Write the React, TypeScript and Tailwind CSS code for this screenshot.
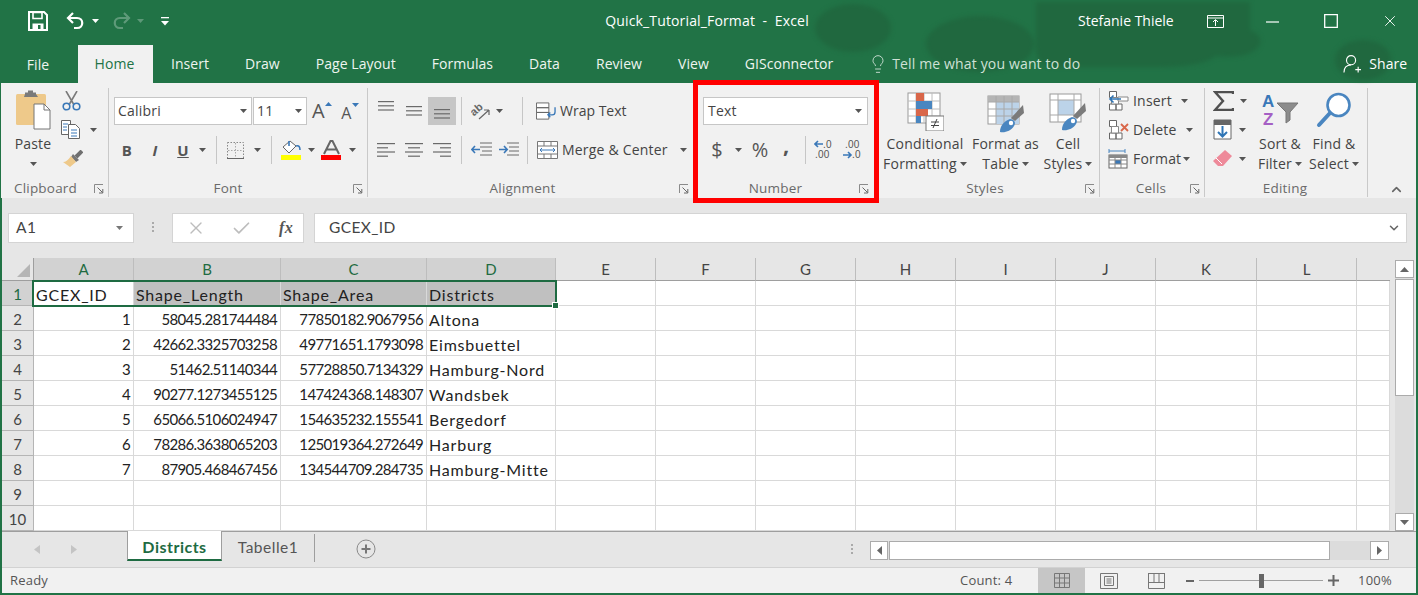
import React from "react";
import { Lightbulb, ChevronDown, ChevronUp, X, Check } from "lucide-react";

const Caret = ({ c = "#555", s = 7 }: { c?: string; s?: number }) => (
  <svg width={s} height={4} viewBox="0 0 7 4" className="shrink-0"><path d="M0 0h7L3.5 4z" fill={c} /></svg>
);

const Launcher = () => (
  <svg width="10" height="10" viewBox="0 0 10 10" className="shrink-0">
    <path d="M.5 9V.5H9" fill="none" stroke="#8a8a8a" />
    <path d="M3.5 3.5L8.5 8.5M8.8 5v4H5" fill="none" stroke="#666" />
  </svg>
);

const Align = ({ w }: { w: [number, number][] }) => (
  <svg width="18" height="16" viewBox="0 0 18 16">
    {w.map(([x, l], i) => (
      <rect key={i} x={x} y={1 + i * 4.2} width={l} height="1.2" fill="#6a6a6a" />
    ))}
  </svg>
);

const Sep = ({ h = "h-[28px]" }: { h?: string }) => <div className={`w-px ${h} bg-[#c6c6c6] shrink-0`} />;

function Group({ w, label, labelPad = "", launcher, children, sep = true }: { w: string; label: string; labelPad?: string; launcher?: string; children: React.ReactNode; sep?: boolean }) {
  return (
    <div className={`${w} shrink-0 flex flex-col ${sep ? "border-r border-[#c9c9c9]" : ""} h-[109px] mt-[5px]`}>
      <div className="h-[88px] flex">{children}</div>
      <div className="flex items-center h-[21px] pt-[4px] pl-[2px] pr-[4px]">
        <div className={`flex-1 text-center text-[13.5px] text-[#6a6a6a] leading-none ${labelPad}`}>{label}</div>
        {launcher !== "none" && <Launcher />}
      </div>
    </div>
  );
}

const SmallIconSave = () => (
  <svg width="20" height="20" viewBox="0 0 20 20">
    <path d="M1 1h15l3 3v15H1z" fill="none" stroke="#fff" strokeWidth="2" />
    <path d="M5 1.5h9v6H5z" fill="none" stroke="#fff" strokeWidth="1.6" />
    <path d="M4.5 12.5h11V18h-11z" fill="#fff" />
    <rect x="10" y="14" width="2.5" height="4" fill="#217346" />
  </svg>
);

const Undo = ({ o = 1 }: { o?: number }) => (
  <svg width="19" height="18" viewBox="0 0 19 18" opacity={o}>
    <path d="M7 1L2 6l5 5" fill="none" stroke="#fff" strokeWidth="2.2" />
    <path d="M2 6h9c7 0 7 10 0 10H8" fill="none" stroke="#fff" strokeWidth="2.2" />
  </svg>
);

function TitleBar() {
  return (
    <div className="h-[42px] flex items-center text-white relative shrink-0">
      <div className="w-[28px]" />
      <SmallIconSave />
      <div className="w-[18px]" />
      <Undo />
      <div className="w-[7px]" /><Caret c="#fff" />
      <div className="w-[13px]" />
      <div className="scale-x-[-1]"><Undo o={0.28} /></div>
      <div className="w-[6px]" /><Caret c="#5d9878" />
      <div className="w-[17px]" />
      <svg width="8" height="9" viewBox="0 0 8 9"><rect width="8" height="1.3" fill="#fff" /><path d="M0 4h8L4 8.5z" fill="#fff" /></svg>
      <div className="w-[435px]" />
      <div className="w-[206px] text-center text-[14px] tracking-[0.15px] whitespace-pre leading-none">Quick_Tutorial_Format  -  Excel</div>
      <div className="w-[268px]" />
      <div className="w-[98px] text-[14px] whitespace-nowrap leading-none">Stefanie Thiele</div>
      <div className="w-[31px]" />
      <svg width="17" height="13" viewBox="0 0 17 13"><path d="M.5.5h16v12H.5zM.5 3h16" fill="none" stroke="#fff" /><path d="M8.5 11V5M6 7l2.5-2.5L11 7" fill="none" stroke="#fff" /></svg>
      <div className="w-[42px]" />
      <svg width="13" height="13" viewBox="0 0 13 13"><path d="M0 7h13" stroke="#fff" strokeWidth="1.2" /></svg>
      <div className="w-[45px]" />
      <svg width="14" height="14" viewBox="0 0 14 14"><path d="M.7.7h12.6v12.6H.7z" fill="none" stroke="#fff" strokeWidth="1.3" /></svg>
      <div className="w-[43px]" />
      <X size={18} strokeWidth={1.2} color="#fff" />
    </div>
  );
}

const tabs = ["Insert", "Draw", "Page Layout", "Formulas", "Data", "Review", "View", "GISconnector"];

function TabsRow() {
  return (
    <div className="h-[41px] relative flex items-end text-[14px] tracking-[0.05px] text-[#eef5f0] shrink-0">
      <div className="w-[78px] h-[38px] flex items-center justify-center leading-none pr-[2px] pt-[2px]">File</div>
      <div className="w-[75px] h-[38px] bg-[#f1f1f1] text-[#217346] flex items-center justify-center leading-none pr-[2px]">Home</div>
      {tabs.map((t) => (
        <div key={t} className="h-[38px] px-[18px] flex items-center leading-none whitespace-nowrap">{t}</div>
      ))}
      <div className="h-[38px] flex items-center ml-[17px] text-[#cfe1d6]">
        <Lightbulb size={20} strokeWidth={1.1} className="mr-[4px]" />
        <span className="leading-none whitespace-nowrap tracking-[0.15px]">Tell me what you want to do</span>
      </div>
      <div className="h-[38px] flex items-center ml-[263px] text-white">
        <svg width="18" height="20" viewBox="0 0 19 20" className="mr-[8px]">
          <circle cx="8.5" cy="6" r="4.8" fill="none" stroke="#fff" strokeWidth="1.2" />
          <path d="M1 19c0-5 3-8 7.5-8M13 16h6M16 13v6" fill="none" stroke="#fff" strokeWidth="1.2" />
        </svg>
        <span className="leading-none">Share</span>
      </div>
    </div>
  );
}

const Big = ({ lines, cx = "w-[80px]", icon }: { lines: React.ReactNode[]; cx?: string; icon: React.ReactNode }) => (
  <div className={`${cx} flex flex-col items-center shrink-0`}>
    <div className="h-[46px] flex items-start justify-center">{icon}</div>
    {lines.map((l, i) => (
      <div key={i} className="h-[20px] flex items-center gap-[3px] leading-none whitespace-nowrap">{l}</div>
    ))}
  </div>
);

const CondIcon = () => (
  <svg width="37" height="39" viewBox="0 0 37 39" className="mt-[4px]">
    <rect x="1" y="1" width="32" height="30" fill="#fff" stroke="#9a9a9a" />
    <path d="M1 9h32M1 17h32M1 24h32M9 1v30M17 1v30M25 1v30" stroke="#bcbcbc" />
    <rect x="9" y="1" width="8" height="8" fill="#d9674a" />
    <rect x="9" y="9" width="16" height="8" fill="#4a86c0" />
    <rect x="9" y="17" width="12" height="7" fill="#d9674a" />
    <rect x="9" y="24" width="5" height="7" fill="#4a86c0" />
    <rect x="19" y="24" width="18" height="15" fill="#fff" stroke="#777" />
    <path d="M24 30h8M24 33.5h8M30 27l-4 9" stroke="#444" fill="none" />
  </svg>
);

const Brush = () => (
  <>
    <path d="M36 10L24 23l4 3 9-8z" fill="#7b7b7b" />
    <path d="M13 37c0-6 4-11 10-13 5 1 6 4 4 7-3 5-9 7-14 6z" fill="#4a86c0" />
    <circle cx="24" cy="28" r="2.2" fill="#fff" />
  </>
);

const TableIcon = () => (
  <svg width="38" height="38" viewBox="0 0 38 38" className="mt-[7px]">
    <rect x="1" y="1" width="31" height="28" fill="#fff" stroke="#9a9a9a" />
    <rect x="1" y="1" width="31" height="6" fill="#b5b5b5" />
    <rect x="9" y="7" width="23" height="22" fill="#bcd3e9" />
    <path d="M1 7h31M1 14h31M1 21h31M9 1v28M17 1v28M25 1v28" stroke="#a8a8a8" />
    <Brush />
  </svg>
);

const StyleIcon = () => (
  <svg width="38" height="38" viewBox="0 0 38 38" className="mt-[5px]">
    <rect x="1" y="1" width="31" height="28" fill="#fff" stroke="#9a9a9a" />
    <rect x="9" y="7" width="16" height="15" fill="#bcd3e9" />
    <path d="M1 7h31M9 1v28M25 1v28M1 22h31" stroke="#a8a8a8" />
    <Brush />
  </svg>
);

const CellIcon = ({ kind }: { kind: "ins" | "del" | "fmt" }) => (
  <svg width="21" height="20" viewBox="0 0 21 20" className="shrink-0">
    {kind === "fmt" ? (
      <>
        <path d="M1 2h16M1 0v4M17 0v4" stroke="#4a86c0" fill="none" />
        <rect x="1" y="6" width="18" height="13" fill="#fff" stroke="#666" />
        <rect x="1" y="6" width="18" height="3" fill="#888" />
        <rect x="7" y="11" width="6" height="4" fill="#3a78b8" />
        <path d="M7 9v10M13 9v10M1 11h18M1 15h18" stroke="#888" />
      </>
    ) : (
      <>
        <path d="M1.5.5h7v6h-7zM1.5 13h6.5v6h-6.5zM8 13h6v6H8z" fill="#fff" stroke="#666" />
        <path d="M3.5 6.5h7V13h-7z" fill="#fff" stroke="#888" />
        {kind === "ins" ? (
          <>
            <path d="M10 6h10v4H10z" fill="#fff" stroke="#888" />
            <path d="M13 8H2M5.5 4.5L2 8l3.5 3.5" stroke="#2f75b5" strokeWidth="1.6" fill="none" />
          </>
        ) : (
          <path d="M13 4l7 7M20 4l-7 7" stroke="#d9674a" strokeWidth="1.8" />
        )}
      </>
    )}
  </svg>
);

function Ribbon() {
  return (
    <div className="h-[115px] bg-[#f1f1f1] flex text-[14px] tracking-[0.2px] text-[#444] shrink-0 ml-px mr-[2px]">
      {/* Clipboard */}
      <Group w="w-[108px]" label="Clipboard" labelPad="pr-[6px]">
        <Big
          cx="w-[52px] ml-[6px]"
          lines={["Paste", <Caret key="c" />]}
          icon={
            <svg width="36" height="40" viewBox="0 0 36 40" className="mt-[2px]">
              <rect x="1" y="4" width="30" height="31" rx="1.5" fill="#eec98a" />
              <path d="M10 4V2.5h3V.5h5v2h3V4l2 3H9z" fill="#7a7a7a" />
              <path d="M19 14h10l6 6v19H19z" fill="#fff" stroke="#777" />
              <path d="M29 14v6h6" fill="none" stroke="#777" />
            </svg>
          }
        />
        <div className="flex flex-col -mt-[2px] w-[46px]">
          <div className="h-[29px] flex items-center pl-[3px]">
            <svg width="19" height="20" viewBox="0 0 19 20">
              <path d="M4 0l7.5 13M15 0L7.5 13" stroke="#7a7a7a" strokeWidth="1.6" />
              <circle cx="4.5" cy="15.5" r="3.3" fill="none" stroke="#3a78b8" strokeWidth="1.6" />
              <circle cx="14.5" cy="15.5" r="3.3" fill="none" stroke="#3a78b8" strokeWidth="1.6" />
            </svg>
          </div>
          <div className="h-[29px] flex items-center pl-[2px] gap-[9px]">
            <svg width="20" height="19" viewBox="0 0 20 19">
              <path d="M.5.5h9v14h-9z" fill="#fff" stroke="#666" />
              <path d="M7.5 4.5h7l4 4v10h-11z" fill="#fff" stroke="#666" />
              <path d="M2 4h5M2 7h4M2 10h4M10 10h6M10 13h6M10 16h6" stroke="#3a78b8" />
            </svg>
            <Caret />
          </div>
          <div className="h-[29px] flex items-center pl-[3px]">
            <svg width="21" height="18" viewBox="0 0 21 18">
              <path d="M14 7l6-6" stroke="#6f6f6f" strokeWidth="4" />
              <path d="M11 4l6 6-3 2-5-5z" fill="#777" />
              <path d="M9 6l5 6-6 5-7-5c3 0 5-2 8-6z" fill="#eec98a" />
            </svg>
          </div>
        </div>
      </Group>

      {/* Font */}
      <Group w="w-[259px]" label="Font" labelPad="pr-[8px]">
        <div className="flex flex-col pl-[5px]">
          <div className="flex items-center h-[28px] mt-[9px]">
            <div className="w-[138px] h-[28px] bg-white border border-[#c6c6c6] flex items-center pl-[3px] pr-[4px] text-[14px]">
              <span className="flex-1 leading-none">Calibri</span><Caret />
            </div>
            <div className="w-[54px] h-[28px] ml-px bg-white border border-[#c6c6c6] flex items-center pl-[3px] pr-[4px]">
              <span className="flex-1 leading-none">11</span><Caret />
            </div>
            <div className="w-[28px] flex justify-center ml-[1px] relative">
              <span className="text-[20px] leading-none text-[#555]">A</span>
              <svg width="7" height="4" viewBox="0 0 7 4" className="mt-[1px]"><path d="M0 4h7L3.5 0z" fill="#3a78b8" /></svg>
            </div>
            <div className="w-[28px] flex justify-center">
              <span className="text-[16px] leading-none text-[#555] mt-[4px]">A</span>
              <svg width="7" height="4" viewBox="0 0 7 4" className="mt-[2px]"><path d="M0 0h7L3.5 4z" fill="#3a78b8" /></svg>
            </div>
          </div>
          <div className="flex items-center h-[28px] mt-[11px] pl-[3px]">
            <div className="w-[20px] text-center font-bold text-[15px] leading-none text-[#555]">B</div>
            <div className="w-[8px]" />
            <div className="w-[20px] text-center italic text-[15px] font-bold leading-none text-[#555]">I</div>
            <div className="w-[8px]" />
            <div className="w-[20px] text-center underline font-bold text-[15px] leading-none text-[#555]">U</div>
            <div className="w-[6px]" /><Caret />
            <div className="w-[10px]" /><Sep />
            <div className="w-[10px]" />
            <svg width="17" height="17" viewBox="0 0 17 17">
              <path d="M.5.5h16v16H.5z" fill="none" stroke="#888" strokeDasharray="1.5 1.5" />
              <path d="M8.5 1v15M1 8.5h15" stroke="#aaa" strokeDasharray="1.5 1.5" />
              <path d="M0 16.5h17" stroke="#666" />
            </svg>
            <div className="w-[10px]" /><Caret />
            <div className="w-[10px]" /><Sep />
            <div className="w-[9px]" />
            <svg width="21" height="21" viewBox="0 0 21 21">
              <path d="M9 1l-7 6 6 6 7-7z" fill="#fff" stroke="#666" />
              <path d="M8 1v5M15 6c3-1 4 1 4 4" stroke="#3a78b8" fill="none" strokeWidth="1.6" />
              <rect x="0" y="15" width="20" height="5" fill="#ffff00" />
            </svg>
            <div className="w-[6px]" /><Caret />
            <div className="w-[6px]" />
            <svg width="21" height="21" viewBox="0 0 21 21">
              <path d="M3 14L9.5 1h2L18 14M6 9.5h9" fill="none" stroke="#666" strokeWidth="2" />
              <rect x="0" y="15" width="20" height="5" fill="#ff0000" />
            </svg>
            <div className="w-[7px]" /><Caret />
          </div>
        </div>
      </Group>

      {/* Alignment */}
      <Group w="w-[326px]" label="Alignment" labelPad="pr-[4px]">
        <div className="flex flex-col pl-[4px]">
          <div className="flex items-center h-[28px] mt-[9px]">
            <div className="w-[28px] h-[28px] flex items-start pt-[3px] justify-center"><Align w={[[1, 16], [1, 16], [1, 16]]} /></div>
            <div className="w-[28px] h-[28px] flex items-center justify-center pt-[3px]"><Align w={[[1, 16], [1, 16], [1, 16]]} /></div>
            <div className="w-[28px] h-[28px] bg-[#c6c6c6] flex items-end pb-[1px] justify-center"><Align w={[[1, 16], [1, 16], [1, 16]]} /></div>
            <div className="w-[5px]" /><Sep />
            <div className="w-[9px]" />
            <svg width="20" height="20" viewBox="0 0 20 20">
              <text x="0" y="12" fontSize="11" fontWeight="700" fontFamily="Liberation Sans" fill="#666" transform="rotate(-40 6 10)">ab</text>
              <path d="M8 18L18 9M18 9v5M18 9h-5" stroke="#666" fill="none" strokeWidth="1.2" />
            </svg>
            <div className="w-[5px]" /><Caret />
            <div className="w-[19px]" /><Sep />
            <div className="w-[13px]" />
            <svg width="20" height="19" viewBox="0 0 21 19" className="shrink-0">
              <path d="M.5.5h13v5H.5zM.5 5.5h13v5H.5zM.5 10.5h13v7H.5z" fill="#fff" stroke="#666" />
              <path d="M20 5v5c0 2-1 3-3 3h-4M15 10.5L12.5 13l2.5 2.5" stroke="#3a78b8" fill="none" strokeWidth="1.4" />
            </svg>
            <span className="ml-[4px] leading-none whitespace-nowrap tracking-normal">Wrap Text</span>
          </div>
          <div className="flex items-center h-[28px] mt-[11px]">
            <div className="w-[28px] flex justify-center"><Align w={[[0, 18], [0, 11], [0, 18], [0, 11]]} /></div>
            <div className="w-[28px] flex justify-center"><Align w={[[0, 18], [3, 12], [0, 18], [3, 12]]} /></div>
            <div className="w-[28px] flex justify-center"><Align w={[[0, 18], [7, 11], [0, 18], [7, 11]]} /></div>
            <div className="w-[5px]" /><Sep />
            <div className="w-[9px]" />
            <svg width="21" height="16" viewBox="0 0 21 16">
              <path d="M9 1h12M9 5h12M11 9h10M9 13h12" stroke="#6a6a6a" />
              <path d="M9 7.5H1M4 4L.8 7.5 4 11" stroke="#3a78b8" fill="none" strokeWidth="1.6" />
            </svg>
            <div className="w-[6px]" />
            <svg width="21" height="16" viewBox="0 0 21 16">
              <path d="M9 1h12M11 5h10M11 9h10M9 13h12" stroke="#6a6a6a" />
              <path d="M1 7.5h8M6 4l3.2 3.5L6 11" stroke="#3a78b8" fill="none" strokeWidth="1.6" />
            </svg>
            <div className="w-[8px]" /><Sep />
            <div className="w-[9px]" />
            <svg width="21" height="18" viewBox="0 0 21 18" className="shrink-0">
              <path d="M.5.5h20v17H.5zM.5 5h20M.5 13h20M7 .5V5M14 .5V5M7 13v5M14 13v5" fill="#fff" stroke="#777" />
              <path d="M3 9h15M5 7l-2 2 2 2M16 7l2 2-2 2" stroke="#3a78b8" fill="none" />
            </svg>
            <span className="ml-[4px] leading-none whitespace-nowrap w-[118px]">Merge &amp; Center</span>
            <Caret />
          </div>
        </div>
      </Group>

      {/* Number */}
      <Group w="w-[179px]" label="Number" labelPad="pr-[4px]" sep={false}>
        <div className="flex flex-col pl-[9px] w-full">
          <div className="w-[165px] h-[28px] mt-[9px] bg-white border border-[#c6c6c6] flex items-center pl-[4px] pr-[5px]">
            <span className="flex-1 leading-none">Text</span><Caret />
          </div>
          <div className="flex items-center h-[28px] mt-[11px] pl-[7px]">
            <span className="text-[20px] leading-none text-[#555] w-[14px] text-center">$</span>
            <div className="w-[11px]" /><Caret />
            <div className="w-[7px]" />
            <span className="text-[20px] leading-none text-[#555] w-[22px] text-center">%</span>
            <div className="w-[12px]" />
            <span className="text-[22px] font-bold leading-none text-[#555] w-[7px] mb-[12px]">,</span>
            <div className="w-[15px]" /><Sep />
            <div className="w-[8px]" />
            <svg width="20" height="20" viewBox="0 0 20 20" className="shrink-0">
              <path d="M9 4H1M4 1L1 4l3 3" stroke="#3a78b8" strokeWidth="1.6" fill="none" />
              <text x="9" y="8" fontSize="10" fontFamily="Liberation Sans" fill="#555">.0</text>
              <text x="1" y="18" fontSize="10" fontFamily="Liberation Sans" fill="#555">.00</text>
            </svg>
            <div className="w-[8px]" />
            <svg width="20" height="20" viewBox="0 0 20 20" className="shrink-0">
              <text x="3" y="8" fontSize="10" fontFamily="Liberation Sans" fill="#555">.00</text>
              <path d="M1 15h8M6 12l3 3-3 3" stroke="#3a78b8" strokeWidth="1.6" fill="none" />
              <text x="10" y="18" fontSize="10" fontFamily="Liberation Sans" fill="#555">.0</text>
            </svg>
          </div>
        </div>
      </Group>

      {/* Styles */}
      <Group w="w-[227px]" label="Styles" labelPad="pl-[10px]">
        <Big cx="w-[104px]" lines={["Conditional", <React.Fragment key="f">Formatting<Caret /></React.Fragment>]} icon={<CondIcon />} />
        <Big cx="w-[67px] ml-[-5px]" lines={["Format as", <React.Fragment key="t">Table<Caret /></React.Fragment>]} icon={<TableIcon />} />
        <Big cx="w-[58px]" lines={["Cell", <React.Fragment key="s">Styles<Caret /></React.Fragment>]} icon={<StyleIcon />} />
      </Group>

      {/* Cells */}
      <Group w="w-[105px]" label="Cells" labelPad="pl-[10px]">
        <div className="flex flex-col pl-[8px] -mt-[2px]">
          <div className="h-[29px] flex items-center"><CellIcon kind="ins" /><span className="ml-[4px] leading-none w-[48px]">Insert</span><Caret /></div>
          <div className="h-[29px] flex items-center"><CellIcon kind="del" /><span className="ml-[4px] leading-none w-[53px]">Delete</span><Caret /></div>
          <div className="h-[29px] flex items-center"><CellIcon kind="fmt" /><span className="ml-[4px] leading-none w-[50px]">Format</span><Caret /></div>
        </div>
      </Group>

      {/* Editing */}
      <Group w="w-[163px]" label="Editing" launcher="none">
        <div className="flex flex-col pl-[8px] -mt-[2px] w-[52px] shrink-0">
          <div className="h-[29px] flex items-center gap-[6px]">
            <svg width="21" height="20" viewBox="0 0 21 20"><path d="M20 3V1H2l8 9-8 9h18v-2" fill="none" stroke="#505050" strokeWidth="2.4" /></svg>
            <Caret />
          </div>
          <div className="h-[29px] flex items-center gap-[6px]">
            <svg width="20" height="21" viewBox="0 0 20 21"><path d="M1 1h17v19H1z" fill="#fff" stroke="#666" /><rect x="1" y="1" width="17" height="5" fill="#666" /><path d="M9.5 7v10M5 13l4.5 4.5L14 13" stroke="#2f75b5" strokeWidth="2" fill="none" /></svg>
            <Caret />
          </div>
          <div className="h-[29px] flex items-center gap-[6px]">
            <svg width="20" height="17" viewBox="0 0 20 17"><path d="M12 0l7 6-9 10H5l-5-5z" fill="#ee8a9a" /><path d="M3 8l6 6" stroke="#fff" /></svg>
            <Caret />
          </div>
        </div>
        <Big
          cx="w-[58px] ml-[-6px]"
          lines={["Sort &", <React.Fragment key="f">Filter<Caret /></React.Fragment>]}
          icon={
            <svg width="38" height="36" viewBox="0 0 38 36" className="mt-[4px]">
              <text x="1" y="15" fontSize="17" fontWeight="700" fontFamily="Liberation Sans" fill="#3a78b8">A</text>
              <text x="2" y="33" fontSize="17" fontWeight="700" fontFamily="Liberation Sans" fill="#a55fc4">Z</text>
              <path d="M16 11h21l-8 9v8l-4 3V20z" fill="#8c8c8c" stroke="#777" />
            </svg>
          }
        />
        <Big
          cx="w-[50px]"
          lines={["Find &", <React.Fragment key="s">Select<Caret /></React.Fragment>]}
          icon={
            <svg width="36" height="36" viewBox="0 0 36 36" className="mt-[4px]">
              <circle cx="22.5" cy="13" r="11" fill="#fff" stroke="#4a86c0" strokeWidth="2.6" />
              <path d="M14 21L3 33" stroke="#4a86c0" strokeWidth="4" strokeLinecap="round" />
            </svg>
          }
        />
      </Group>

      <div className="flex-1 flex items-end justify-end pb-[1px] pr-[12px]">
        <ChevronUp size={15} strokeWidth={2.6} color="#666" />
      </div>
    </div>
  );
}

function FormulaBar() {
  return (
    <div className="h-[60px] flex items-start pt-[15px] pl-[6px] pr-[9px] shrink-0 text-[15.5px] tracking-[0.4px] text-[#444] font-['Lato']">
      <div className="w-[126px] h-[30px] bg-white border border-[#d4d4d4] flex items-center pl-[7px] pr-[10px]">
        <span className="flex-1 leading-none">A1</span><Caret c="#777" />
      </div>
      <div className="w-[38px] flex flex-col items-center gap-[2px] pt-[9px]">
        <i className="w-[2px] h-[2px] bg-[#aaa]" /><i className="w-[2px] h-[2px] bg-[#aaa]" /><i className="w-[2px] h-[2px] bg-[#aaa]" />
      </div>
      <div className="w-[132px] h-[30px] bg-white border border-[#d4d4d4] flex items-center">
        <div className="w-[46px] flex justify-center"><X size={20} strokeWidth={1.6} color="#bdbdbd" /></div>
        <div className="w-[44px] flex justify-center"><Check size={21} strokeWidth={2} color="#bdbdbd" /></div>
        <div className="flex-1 text-center italic font-bold text-[16px] leading-none font-['Liberation_Serif'] text-[#555] pl-[6px]">fx</div>
      </div>
      <div className="w-[10px]" />
      <div className="flex-1 h-[30px] bg-white border border-[#d4d4d4] flex items-center pl-[14px] pr-[5px]">
        <span className="flex-1 leading-none">GCEX_ID</span>
        <ChevronDown size={14} strokeWidth={2.6} color="#666" />
      </div>
    </div>
  );
}

const cols = ["A", "B", "C", "D", "E", "F", "G", "H", "I", "J", "K", "L", ""];
const rows: [string, string, string, string][] = [
  ["1", "58045.281744484", "77850182.9067956", "Altona"],
  ["2", "42662.3325703258", "49771651.1793098", "Eimsbuettel"],
  ["3", "51462.51140344", "57728850.7134329", "Hamburg-Nord"],
  ["4", "90277.1273455125", "147424368.148307", "Wandsbek"],
  ["5", "65066.5106024947", "154635232.155541", "Bergedorf"],
  ["6", "78286.3638065203", "125019364.272649", "Harburg"],
  ["7", "87905.468467456", "134544709.284735", "Hamburg-Mitte"],
  ["", "", "", ""],
  ["", "", "", ""],
];
const gridCols = "grid grid-cols-[32px_100px_147px_146px_129px_100px_100px_100px_100px_100px_100px_101px_100px_33px]";
const cellBase = "h-[25px] bg-white border-r border-b border-[#d9d9d9] flex items-center overflow-hidden whitespace-nowrap pl-[2px] pr-[3px] pt-[3px] leading-none";

function Sheet() {
  return (
    <div className="h-[273px] flex shrink-0">
      <div className="w-[1389px] shrink-0 relative font-['Lato'] text-[15px] text-[#222]">
        <div className={gridCols}>
          <div className="h-[23px] bg-[#e6e6e6] border-b border-r border-[#9e9e9e] flex items-end justify-end pr-[3px] pb-[3px]">
            <svg width="13" height="13" viewBox="0 0 13 13"><path d="M13 0v13H0z" fill="#b5b5b5" /></svg>
          </div>
          {cols.map((c, i) => (
            <div key={c || "x"} className={`h-[23px] border-b border-[#9e9e9e] flex items-center justify-center leading-none ${i < 12 ? "border-r border-r-[#bdbdbd]" : ""} ${i < 4 ? "bg-[#d2d2d2] text-[#1f6b41]" : "bg-[#e6e6e6] text-[#444]"}`}>{c}</div>
          ))}
          {Array.from({ length: 10 }).map((_, r) => {
            const sel = r === 0;
            const data = r > 0 ? rows[r - 1] : ["GCEX_ID", "Shape_Length", "Shape_Area", "Districts"];
            return (
              <React.Fragment key={r}>
                <div className={`h-[25px] border-b border-r flex items-center justify-center leading-none pt-[3px] border-[#b5b5b5] ${sel ? "bg-[#d2d2d2] text-[#1f6b41]" : "bg-[#e6e6e6] text-[#444]"}`}>{r + 1}</div>
                {cols.map((_, c) => {
                  const isNum = !sel && c < 3;
                  return (
                    <div key={c} className={`${cellBase} ${sel && c > 0 && c < 4 ? "!bg-[#c0c0c0]" : ""} ${isNum ? "justify-end text-[15px] tracking-[-0.65px]" : "text-[16px] tracking-[0.8px]"}`}>{c < 4 ? data[c] : ""}</div>
                  );
                })}
              </React.Fragment>
            );
          })}
        </div>
        <div className="absolute left-[30px] top-[22px] w-[525px] h-[27px] border-2 border-[#1e6b42]">
          <div className="absolute right-[-4px] bottom-[-4px] w-[7px] h-[7px] bg-[#1e6b42] border border-white" />
        </div>
      </div>
      <div className="w-[4px]" />
      <div className="w-[19px] bg-[#dcdcdc] flex flex-col mt-[2px]">
        <div className="h-[18px] bg-white border border-[#ababab] flex items-center justify-center">
          <svg width="9" height="5" viewBox="0 0 9 5"><path d="M0 5h9L4.5 0z" fill="#666" /></svg>
        </div>
        <div className="h-[117px] mt-[1px] bg-white border border-[#ababab]" />
        <div className="flex-1" />
        <div className="h-[18px] bg-white border border-[#ababab] flex items-center justify-center">
          <svg width="9" height="5" viewBox="0 0 9 5"><path d="M0 0h9L4.5 5z" fill="#666" /></svg>
        </div>
      </div>
    </div>
  );
}

function SheetTabs() {
  return (
    <div className="h-[36px] flex shrink-0 border-t border-[#9e9e9e] text-[15.5px] tracking-[0.5px] font-['Lato'] text-[#555] items-start">
      <div className="w-[125px] h-[34px] flex items-center pl-[32px] gap-[31px]">
        <svg width="6" height="9" viewBox="0 0 6 9"><path d="M6 0v9L0 4.5z" fill="#c4c4c4" /></svg>
        <svg width="6" height="9" viewBox="0 0 6 9"><path d="M0 0v9l6-4.5z" fill="#c4c4c4" /></svg>
      </div>
      <div className="w-[95px] h-[30px] -mt-px pt-[3px] bg-white border-l border-r border-b-2 border-l-[#9e9e9e] border-r-[#9e9e9e] border-b-[#1e6b42] font-bold text-[#1e6b42] flex items-center justify-center leading-none text-[16px]">Districts</div>
      <div className="w-[93px] h-[28px] flex items-center justify-center leading-none border-r border-[#9e9e9e] mt-[2px]">Tabelle1</div>
      <div className="w-[41px]" />
      <svg width="20" height="20" viewBox="0 0 20 20" className="mt-[7px]">
        <circle cx="10" cy="10" r="9" fill="none" stroke="#8a8a8a" />
        <path d="M10 5.5v9M5.5 10h9" stroke="#777" strokeWidth="2" />
      </svg>
      <div className="w-[485px] h-[30px] flex items-center justify-end pr-[8px] pt-[4px]">
        <div className="flex flex-col gap-[2px]">
          <i className="block w-[2px] h-[2px] bg-[#aaa]" /><i className="block w-[2px] h-[2px] bg-[#aaa]" /><i className="block w-[2px] h-[2px] bg-[#aaa]" />
        </div>
      </div>
      <div className="w-[519px] h-[19px] mt-[9px] flex ml-[9px] bg-[#dcdcdc]">
        <div className="w-[18px] bg-white border border-[#ababab] flex items-center justify-center">
          <svg width="5" height="9" viewBox="0 0 5 9"><path d="M5 0v9L0 4.5z" fill="#666" /></svg>
        </div>
        <div className="w-[441px] ml-px bg-white border border-[#ababab]" />
        <div className="flex-1" />
        <div className="w-[19px] bg-white border border-[#ababab] flex items-center justify-center">
          <svg width="5" height="9" viewBox="0 0 5 9"><path d="M0 0v9l5-4.5z" fill="#666" /></svg>
        </div>
      </div>
    </div>
  );
}

function StatusBar() {
  return (
    <div className="h-[26px] bg-[#f1f1f1] border-t border-[#d2d2d2] flex items-center shrink-0 text-[13px] tracking-[0.2px] text-[#555]">
      <div className="w-[958px] pl-[8px] leading-none">Ready</div>
      <div className="w-[78px] leading-none">Count: 4</div>
      <div className="w-[47px] h-full bg-[#c6c6c6] flex items-center justify-center">
        <svg width="16" height="15" viewBox="0 0 16 15"><path d="M.5.5h15v14H.5zM.5 5h15M.5 10h15M5.5.5v14M10.5.5v14" fill="none" stroke="#777" /></svg>
      </div>
      <div className="w-[48px] flex justify-center">
        <svg width="18" height="16" viewBox="0 0 18 16"><path d="M.5.5h17v15H.5z" fill="none" stroke="#777" /><path d="M4.5 3.5h9v9h-9zM6.5 6h5M6.5 8h5M6.5 10h5" fill="none" stroke="#777" /></svg>
      </div>
      <div className="w-[47px] flex justify-center">
        <svg width="17" height="16" viewBox="0 0 17 16"><path d="M.5 0v15.5h16V0M.5 9.5h16M.5.5h16M6 .5v9M11 .5v9" fill="none" stroke="#777" /></svg>
      </div>
      <div className="w-[6px]" />
      <div className="w-[8px] h-[2px] bg-[#666]" />
      <div className="w-[5px]" />
      <div className="w-[124px] h-px bg-[#a0a0a0] flex items-center pl-[60px]">
        <div className="w-[5px] h-[14px] bg-[#666] shrink-0" />
      </div>
      <div className="w-[5px]" />
      <svg width="11" height="11" viewBox="0 0 11 11"><path d="M5.5 0v11M0 5.5h11" stroke="#666" strokeWidth="2" /></svg>
      <div className="w-[19px]" />
      <div className="leading-none">100%</div>
    </div>
  );
}

export default function App() {
  return (
    <div className="relative w-[1418px] h-[595px] overflow-hidden bg-[#217346] flex flex-col font-['Open_Sans','Noto_Sans',sans-serif]">
      <svg width="1418" height="83" viewBox="0 0 1418 83" className="absolute left-0 top-0 blur-[2px]">
        <g fill="#20683f">
          <ellipse cx="853" cy="28" rx="38" ry="24" />
          <ellipse cx="980" cy="44" rx="54" ry="28" />
          <path d="M1036 2h214v28c8 4 12 8 10 14-6 12-24 14-44 12-10 8-30 11-60 11h-100c-14 0-20-8-20-20z" />
          <ellipse cx="1363" cy="60" rx="28" ry="20" />
        </g>
      </svg>
      <TitleBar />
      <TabsRow />
      <Ribbon />
      <div className="bg-[#e6e6e6] ml-[2px] mr-[2px] flex flex-col">
        <FormulaBar />
        <Sheet />
        <SheetTabs />
        <StatusBar />
      </div>
      <div className="absolute left-[693px] top-[80px] w-[186px] h-[123px] border-[5px] border-[#ff0000]" />
    </div>
  );
}
